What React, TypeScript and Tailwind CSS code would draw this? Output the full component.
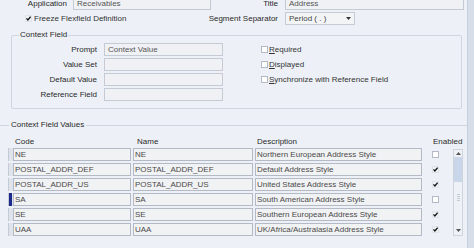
import React from 'react';

type Row = { code: string; name: string; desc: string; on: boolean; current?: boolean };

const ROWS: Row[] = [
  { code: 'NE', name: 'NE', desc: 'Northern European Address Style', on: false },
  { code: 'POSTAL_ADDR_DEF', name: 'POSTAL_ADDR_DEF', desc: 'Default Address Style', on: true },
  { code: 'POSTAL_ADDR_US', name: 'POSTAL_ADDR_US', desc: 'United States Address Style', on: true },
  { code: 'SA', name: 'SA', desc: 'South American Address Style', on: false, current: true },
  { code: 'SE', name: 'SE', desc: 'Southern European Address Style', on: true },
  { code: 'UAA', name: 'UAA', desc: 'UK/Africa/Australasia Address Style', on: true },
];

function Check({ on, faint }: { on: boolean; faint?: boolean }) {
  return (
    <span
      className={
        faint
          ? 'inline-flex h-[7px] w-[7px] shrink-0 items-center justify-center border border-[#dfe3ea] bg-[#eef1f6]'
          : 'inline-flex h-[7px] w-[7px] shrink-0 items-center justify-center border border-[#b3bac5] bg-white'
      }
    >
      {on && (
        <svg viewBox="0 0 5 5" className="h-[5px] w-[5px]">
          <path d="M0.5 2.4 L1.9 3.9 L4.6 0.7" fill="none" stroke="#111" strokeWidth="1.3" />
        </svg>
      )}
    </span>
  );
}

function Field({ w, children }: { w: string; children?: React.ReactNode }) {
  return (
    <div
      className={`${w} h-[13px] overflow-hidden whitespace-nowrap border border-[#c5cbd4] bg-[#eff1f4] pl-[3px] leading-[11px] text-[#555]`}
    >
      {children}
    </div>
  );
}

function Cell({ w, children }: { w: string; children?: React.ReactNode }) {
  return (
    <div
      className={`${w} h-[13px] overflow-hidden whitespace-nowrap border border-[#b3bac6] bg-[#f1f2f4] pl-[1px] leading-[11px] text-[#4a4a4a]`}
    >
      {children}
    </div>
  );
}

export default function App() {
  return (
    <div className="flex h-[248px] w-[474px] overflow-hidden bg-[#edf1f7] font-['Liberation_Sans',Arial,sans-serif] text-[8px] leading-[10px] text-[#2a2a2a]">
      <div className="flex w-[467px] shrink-0 flex-col">
        {/* header fields */}
        <div className="-mt-[3px] flex h-[13px] items-center">
          <div className="w-[67px] text-right">Application</div>
          <div className="ml-[6px]">
            <Field w="w-[138px]">Receivables</Field>
          </div>
          <div className="w-[67px] text-right">Title</div>
          <div className="ml-[7px]">
            <Field w="w-[179px]">Address</Field>
          </div>
        </div>

        <div className="mt-[2px] flex h-[13px] items-center">
          <div className="flex w-[211px] items-center gap-[2px] pl-[25px] text-[#333]">
            <Check on faint />
            <span>Freeze Flexfield Definition</span>
          </div>
          <div className="flex w-[67px] justify-end whitespace-nowrap">Segment Separator</div>
          <div className="ml-[7px] flex h-[13px] w-[70px] items-center justify-between border border-[#c5cbd4] bg-[#f3f4f6] pl-[3px] pr-[3px] text-[#444]">
            <span>Period ( . )</span>
            <svg viewBox="0 0 5 3" className="h-[3px] w-[5px]">
              <path d="M0 0 L5 0 L2.5 3 Z" fill="#333" />
            </svg>
          </div>
        </div>

        {/* Context Field */}
        <fieldset className="mt-[5px] ml-[11px] w-[451px] rounded-[2px] border border-[#d0d6df] pb-[7px]">
          <legend className="ml-[7px] px-[1px] leading-[10px]">Context Field</legend>
          <div className="flex flex-col gap-[2px] pt-[3px]">
            {[
              { label: 'Prompt', value: 'Context Value', check: 'Required' },
              { label: 'Value Set', value: '', check: 'Displayed' },
              { label: 'Default Value', value: '', check: 'Synchronize with Reference Field' },
              { label: 'Reference Field', value: '', check: '' },
            ].map((r) => (
              <div key={r.label} className="flex h-[13px] items-center">
                <div className="w-[85px] text-right">{r.label}</div>
                <div className="ml-[7px]">
                  <Field w="w-[119px]">{r.value}</Field>
                </div>
                {r.check && (
                  <div className="ml-[38px] flex items-center gap-[1px] text-[#333]">
                    <Check on={false} />
                    <span>
                      <span className="underline">{r.check[0]}</span>
                      {r.check.slice(1)}
                    </span>
                  </div>
                )}
              </div>
            ))}
          </div>
        </fieldset>

        {/* Context Field Values */}
        <div className="mt-[11px] flex h-[10px] items-center">
          <div className="h-px w-[9px] bg-[#d0d6df]" />
          <span className="px-[2px]">Context Field Values</span>
          <div className="h-px flex-1 bg-[#d0d6df]" />
        </div>

        <div className="mt-[7px] flex h-[10px] items-center">
          <div className="w-[13px]" />
          <div className="w-[120px] pl-[2px]">Code</div>
          <div className="w-[122px] pl-[4px]">Name</div>
          <div className="w-[167px] pl-[2px]">Description</div>
          <div className="pl-[11px]">Enabled</div>
        </div>

        <div className="mt-[1px] flex">
          <div className="flex flex-col gap-[2px]">
            {ROWS.map((r) => (
              <div key={r.code} className="flex h-[13px]">
                <div className="ml-[8px] h-[13px] w-[5px] border-l border-[#c3cad4] bg-[#dfe4ec]">
                  {r.current && <div className="h-[13px] w-[3px] bg-[#1c2a8c]" />}
                </div>
                <Cell w="w-[118px]">{r.code}</Cell>
                <div className="ml-[2px]">
                  <Cell w="w-[120px]">{r.name}</Cell>
                </div>
                <div className="ml-[2px]">
                  <Cell w="w-[167px]">{r.desc}</Cell>
                </div>
                <div className="flex w-[31px] items-center pl-[10px]">
                  <Check on={r.on} faint={r.on} />
                </div>
              </div>
            ))}
          </div>

          {/* scrollbar */}
          <div className="mt-[1px] flex h-[87px] w-[10px] flex-col items-center border border-[#cdd4de] bg-[#eef1f6]">
            <svg viewBox="0 0 5 3" className="mt-[2px] h-[3px] w-[5px]">
              <path d="M0 3 L5 3 L2.5 0 Z" fill="#555" />
            </svg>
            <div className="mt-[2px] h-[25px] w-[8px] bg-[#c9d6ea]" />
            <div className="mt-[12px] flex flex-col items-center gap-[1px]">
              {[0, 1, 2, 3].map((i) => (
                <div key={i} className="h-px w-[3px] bg-[#c2cad6]" />
              ))}
            </div>
            <div className="flex-1" />
            <svg viewBox="0 0 5 3" className="mb-[3px] h-[3px] w-[5px]">
              <path d="M0 0 L5 0 L2.5 3 Z" fill="#555" />
            </svg>
          </div>
        </div>
      </div>

      <div className="flex-1 border-l border-[#c6d0dd] bg-[#d6deea]" />
    </div>
  );
}
